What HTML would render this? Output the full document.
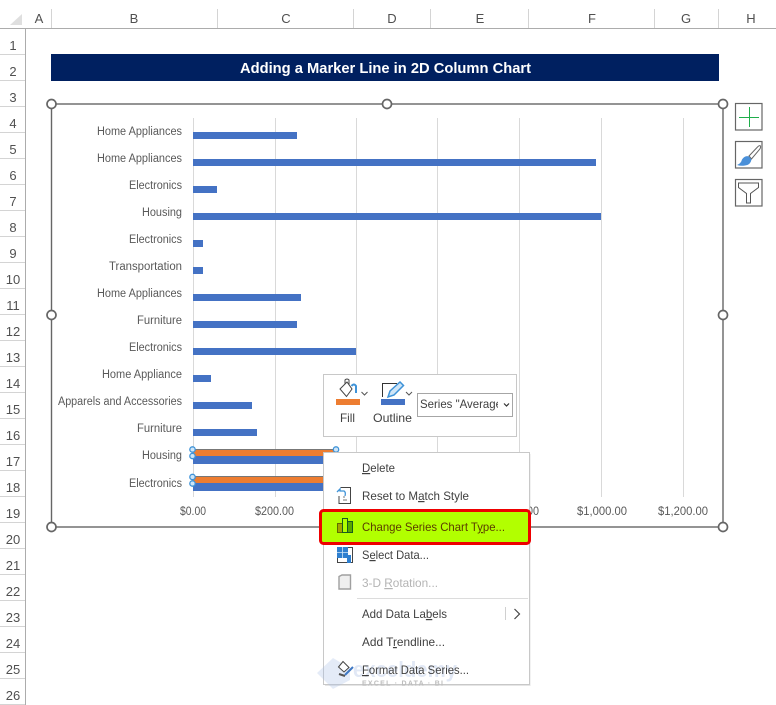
<!DOCTYPE html>
<html><head><meta charset="utf-8"><style>
html,body{margin:0;padding:0;background:#fff;width:776px;height:705px;overflow:hidden}
svg{display:block;position:absolute;left:0;top:0}
text{font-family:"Liberation Sans",sans-serif}
.h{font-size:13px;fill:#505050;text-anchor:middle}
.l{font-size:11.5px;fill:#595959}
.m{font-size:12px;fill:#404040}
</style></head><body>
<svg width="776" height="705" viewBox="0 0 776 705" xmlns="http://www.w3.org/2000/svg">
<rect width="776" height="705" fill="#fff"/>
<!-- headers -->
<path d="M22 14V25H10Z" fill="#dfdfdf"/>
<g stroke="#d4d4d4" fill="none">
<path d="M51.5 9V28M217.5 9V28M353.5 9V28M430.5 9V28M528.5 9V28M654.5 9V28M718.5 9V28"/>
<path d="M0 54.5H25M0 80.5H25M0 106.5H25M0 132.5H25M0 158.5H25M0 184.5H25M0 210.5H25M0 236.5H25M0 262.5H25M0 288.5H25M0 314.5H25M0 340.5H25M0 366.5H25M0 392.5H25M0 418.5H25M0 444.5H25M0 470.5H25M0 496.5H25M0 522.5H25M0 548.5H25M0 574.5H25M0 600.5H25M0 626.5H25M0 652.5H25M0 678.5H25M0 704.5H25"/>
</g>
<path d="M0 28.500H776" stroke="#acacac"/><path d="M25.500 28V705" stroke="#acacac"/>
<g>
<text class="h" x="39" y="23">A</text><text class="h" x="134" y="23">B</text><text class="h" x="286" y="23">C</text><text class="h" x="392" y="23">D</text><text class="h" x="480" y="23">E</text><text class="h" x="592" y="23">F</text><text class="h" x="686" y="23">G</text><text class="h" x="751" y="23">H</text>
<text class="h" x="13" y="50">1</text><text class="h" x="13" y="76">2</text><text class="h" x="13" y="102">3</text><text class="h" x="13" y="128">4</text><text class="h" x="13" y="154">5</text><text class="h" x="13" y="180">6</text><text class="h" x="13" y="206">7</text><text class="h" x="13" y="232">8</text><text class="h" x="13" y="258">9</text><text class="h" x="13" y="284">10</text><text class="h" x="13" y="310">11</text><text class="h" x="13" y="336">12</text><text class="h" x="13" y="362">13</text><text class="h" x="13" y="388">14</text><text class="h" x="13" y="414">15</text><text class="h" x="13" y="440">16</text><text class="h" x="13" y="466">17</text><text class="h" x="13" y="492">18</text><text class="h" x="13" y="518">19</text><text class="h" x="13" y="544">20</text><text class="h" x="13" y="570">21</text><text class="h" x="13" y="596">22</text><text class="h" x="13" y="622">23</text><text class="h" x="13" y="648">24</text><text class="h" x="13" y="674">25</text><text class="h" x="13" y="700">26</text>
</g>
<!-- title -->
<rect x="51" y="54" width="668" height="27" fill="#002060"/>
<text x="240" y="73" font-size="14.5" font-weight="700" fill="#fff" textLength="291" lengthAdjust="spacingAndGlyphs">Adding a Marker Line in 2D Column Chart</text>
<!-- grid -->
<path d="M193.500 118V497M275.500 118V497M356.500 118V497M437.500 118V497M519.500 118V497M601.500 118V497M683.500 118V497" stroke="#d9d9d9" fill="none"/>
<!-- bars -->
<g fill="#4472c4">
<rect x="193" y="132" width="104" height="7"/><rect x="193" y="159" width="403" height="7"/><rect x="193" y="186" width="24" height="7"/><rect x="193" y="213" width="408" height="7"/><rect x="193" y="240" width="10" height="7"/><rect x="193" y="267" width="10" height="7"/><rect x="193" y="294" width="108" height="7"/><rect x="193" y="321" width="104" height="7"/><rect x="193" y="348" width="163" height="7"/><rect x="193" y="375" width="18" height="7"/><rect x="193" y="402" width="59" height="7"/><rect x="193" y="429" width="64" height="7"/><rect x="193" y="456" width="143" height="8"/><rect x="193" y="483" width="143" height="8"/>
</g>
<rect x="193" y="449" width="143" height="7" fill="#ed7d31"/><rect x="193" y="476" width="143" height="7" fill="#ed7d31"/>
<path d="M193 449.500H336M193 476.500H336" stroke="#777" stroke-width="1"/>
<!-- labels -->
<g>
<text class="l" x="97" y="135" textLength="85" lengthAdjust="spacingAndGlyphs">Home Appliances</text>
<text class="l" x="97" y="162" textLength="85" lengthAdjust="spacingAndGlyphs">Home Appliances</text>
<text class="l" x="129" y="189" textLength="53" lengthAdjust="spacingAndGlyphs">Electronics</text>
<text class="l" x="142" y="216" textLength="40" lengthAdjust="spacingAndGlyphs">Housing</text>
<text class="l" x="129" y="243" textLength="53" lengthAdjust="spacingAndGlyphs">Electronics</text>
<text class="l" x="109" y="270" textLength="73" lengthAdjust="spacingAndGlyphs">Transportation</text>
<text class="l" x="97" y="297" textLength="85" lengthAdjust="spacingAndGlyphs">Home Appliances</text>
<text class="l" x="137" y="324" textLength="45" lengthAdjust="spacingAndGlyphs">Furniture</text>
<text class="l" x="129" y="351" textLength="53" lengthAdjust="spacingAndGlyphs">Electronics</text>
<text class="l" x="102" y="378" textLength="80" lengthAdjust="spacingAndGlyphs">Home Appliance</text>
<text class="l" x="58" y="405" textLength="124" lengthAdjust="spacingAndGlyphs">Apparels and Accessories</text>
<text class="l" x="137" y="432" textLength="45" lengthAdjust="spacingAndGlyphs">Furniture</text>
<text class="l" x="142" y="459" textLength="40" lengthAdjust="spacingAndGlyphs">Housing</text>
<text class="l" x="129" y="487" textLength="53" lengthAdjust="spacingAndGlyphs">Electronics</text>
<text class="l" x="180" y="515" textLength="26" lengthAdjust="spacingAndGlyphs">$0.00</text>
<text class="l" x="255" y="515" textLength="39" lengthAdjust="spacingAndGlyphs">$200.00</text>
<text class="l" x="500" y="515" textLength="39" lengthAdjust="spacingAndGlyphs">$600.00</text>
<text class="l" x="577" y="515" textLength="50" lengthAdjust="spacingAndGlyphs">$1,000.00</text>
<text class="l" x="658" y="515" textLength="50" lengthAdjust="spacingAndGlyphs">$1,200.00</text>
</g>
<!-- frame -->
<rect x="51.500" y="104" width="671.500" height="423" fill="none" stroke="#666" stroke-width="1.400"/>
<g fill="#fff" stroke="#666" stroke-width="1.700">
<circle cx="51.500" cy="104" r="4.500"/><circle cx="387" cy="104" r="4.500"/><circle cx="723" cy="104" r="4.500"/><circle cx="51.500" cy="315" r="4.500"/><circle cx="723" cy="315" r="4.500"/><circle cx="51.500" cy="527" r="4.500"/><circle cx="723" cy="527" r="4.500"/>
</g>
<g fill="#cfe5f7" stroke="#3f93d8" stroke-width="1.300">
<circle cx="192.500" cy="449.500" r="2.700"/><circle cx="192.500" cy="456" r="2.700"/><circle cx="192.500" cy="477" r="2.700"/><circle cx="192.500" cy="483.500" r="2.700"/><circle cx="336" cy="449.500" r="2.700"/>
</g>
<!-- side buttons -->
<g fill="#fff" stroke="#666" stroke-width="1.200">
<rect x="735.500" y="103.500" width="26.500" height="26.500"/><rect x="735.500" y="141.500" width="26.500" height="26.500"/><rect x="735.500" y="179.500" width="26.500" height="26.500"/>
</g>
<rect x="739" y="117" width="20" height="1" fill="#1fae4b"/><rect x="749" y="107" width="1" height="20" fill="#1fae4b"/>
<path d="M749 156L757.500 147Q759.500 145 760.500 146Q761 147.500 759.500 149.500L751.500 159Z" fill="#fff" stroke="#666" stroke-width="1"/>
<path d="M737 165Q741 163.500 742 159.500Q745 155 749 156.500L751.500 159.500Q750.500 165 745 165.500Q740.500 166.300 737 165Z" fill="#4a90d9"/>
<path d="M738.500 183H758.500V187.500L750.500 193.500V203H746.500V193.500L738.500 187.500Z" fill="#fff" stroke="#555" stroke-width="1"/>
<!-- mini toolbar -->
<rect x="323.500" y="374.500" width="193" height="62" fill="#fff" stroke="#c8c8c8"/>
<path d="M340 389L347 382L352 389L346.500 396.500Z" fill="#fff" stroke="#444" stroke-width="1"/>
<path d="M345 384V380Q347 378 349 380V385" fill="none" stroke="#444" stroke-width="1"/>
<path d="M351.500 386Q354 383 356 386V393" fill="none" stroke="#3f93d8" stroke-width="2"/>
<path d="M361.500 392L364.500 395L367.500 392M406 392L409 395L412 392" fill="none" stroke="#555" stroke-width="1"/>
<rect x="336" y="399" width="24" height="6" fill="#ed7d31"/>
<rect x="381" y="399" width="24" height="6" fill="#4472c4"/>
<path d="M382.500 397V383.500H397" fill="none" stroke="#333" stroke-width="1"/>
<path d="M388 397L390 391L400 382L403.500 385.500L394 395Z" fill="#cfe5f7" stroke="#3f93d8" stroke-width="1.500"/>
<text class="m" x="340" y="422" textLength="15" lengthAdjust="spacingAndGlyphs">Fill</text>
<text class="m" x="373" y="422" textLength="39" lengthAdjust="spacingAndGlyphs">Outline</text>
<rect x="417.500" y="393.500" width="95" height="23" fill="#fff" stroke="#a6a6a6"/>
<svg x="420" y="393" width="78" height="23"><text class="m" x="0" y="15" textLength="82" lengthAdjust="spacingAndGlyphs">Series "Average</text></svg>
<path d="M504 403.500L506.500 406L509 403.500" fill="none" stroke="#333" stroke-width="1.200"/>
<!-- context menu -->
<rect x="325" y="454" width="205.500" height="232" fill="#999" opacity=".25"/>
<rect x="323.500" y="452.500" width="206" height="232" fill="#fff" stroke="#c8c8c8"/>
<!-- watermark -->
<g opacity=".3">
<path d="M317 673L333 658L350 668L350 680L333 689Z" fill="#a9bfe6"/>
<text x="353" y="677" font-size="22" font-weight="700" fill="#9db4e0" textLength="104" lengthAdjust="spacingAndGlyphs">exceldemy</text>
</g>
<text x="362" y="685.500" font-size="7" font-weight="700" fill="#bdbdbd" textLength="81" lengthAdjust="spacing">EXCEL · DATA · BI</text>
<!-- menu highlight -->
<rect x="320.500" y="510.500" width="209" height="33" rx="3" fill="#b2ff00" stroke="#ee0000" stroke-width="3"/>
<!-- menu text -->
<text class="m" x="362" y="472" textLength="33" lengthAdjust="spacingAndGlyphs"><tspan text-decoration="underline">D</tspan>elete</text>
<text class="m" x="362" y="500" textLength="107" lengthAdjust="spacingAndGlyphs">Reset to M<tspan text-decoration="underline">a</tspan>tch Style</text>
<text class="m" x="362" y="531" textLength="143" lengthAdjust="spacingAndGlyphs" style="fill:#5a3c00">Change Series Chart T<tspan text-decoration="underline">y</tspan>pe...</text>
<text class="m" x="362" y="559" textLength="67" lengthAdjust="spacingAndGlyphs">S<tspan text-decoration="underline">e</tspan>lect Data...</text>
<text class="m" x="362" y="587" textLength="76" lengthAdjust="spacingAndGlyphs" style="fill:#b4b4b4">3-D <tspan text-decoration="underline">R</tspan>otation...</text>
<text class="m" x="362" y="618" textLength="85" lengthAdjust="spacingAndGlyphs">Add Data La<tspan text-decoration="underline">b</tspan>els</text>
<text class="m" x="362" y="646" textLength="83" lengthAdjust="spacingAndGlyphs">Add T<tspan text-decoration="underline">r</tspan>endline...</text>
<text class="m" x="362" y="674" textLength="107" lengthAdjust="spacingAndGlyphs"><tspan text-decoration="underline">F</tspan>ormat Data Series...</text>
<path d="M357 598.500H528" stroke="#dcdcdc"/><path d="M505.500 607V620" stroke="#d0d0d0"/>
<path d="M514.500 609L519.500 614L514.500 619" fill="none" stroke="#444" stroke-width="1.200"/>
<!-- menu icons -->
<path d="M340.500 487.500H350.500V503.500H339V496" fill="#fff" stroke="#444" stroke-width="1"/>
<path d="M337 492L340 489V491H344Q346 492 345 496" fill="none" stroke="#3f93d8" stroke-width="1.300"/>
<path d="M343 497H345M343 500H347" stroke="#777"/>
<rect x="337.500" y="523.500" width="5" height="9" fill="#a6a600" stroke="#5f6b00"/>
<rect x="342.500" y="518.500" width="5" height="14" fill="#b2ff00" stroke="#1a5c20"/>
<rect x="347.500" y="521.500" width="5" height="11" fill="#5aa800" stroke="#1a5c20"/>
<path d="M348 547.500H352.500V562.500H337.500V558" fill="#fff" stroke="#444"/>
<rect x="337" y="547" width="11" height="11" fill="#2f80d0"/>
<path d="M342.500 547V558M337 552.500H348" stroke="#cfe5f7" stroke-width=".8"/>
<rect x="347" y="555" width="4" height="8" fill="#2d7fd0"/>
<path d="M339 576.500L342 575H350.500V589H339Z" fill="#efefef" stroke="#a0a0a0" stroke-width="1.400"/>
<path d="M338.500 667L343 661.500L349 667.500L344 672Z" fill="#fff" stroke="#444"/>
<path d="M345 675L353 667" stroke="#3f78c4" stroke-width="2"/>
<path d="M339 674L345 676" stroke="#555" stroke-width="2"/>
</svg>
</body></html>
